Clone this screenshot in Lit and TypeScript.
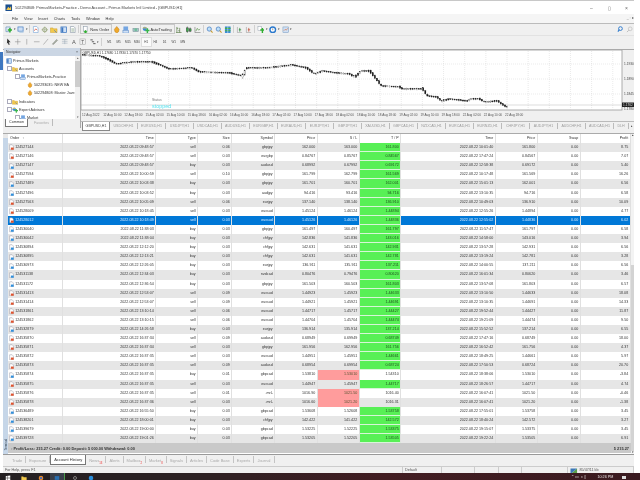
import { LitElement, css, html, svg } from 'lit';
import { customElement } from 'lit/decorators.js';

// id|open time|type|size|symbol|price|s/l|t/p|close time|close price|profit|s = stop hit
const ROWS = `124527144|09:48:57|sell|0.06|gbpjpy|162.000|163.000|161.800|10:01:40|161.800|8.75
124527146|09:48:57|sell|0.03|eurgbp|0.84767|0.85767|0.84567|17:47:24|0.84567|7.07
124527147|09:48:57|buy|0.03|audusd|0.68992|0.67992|0.69172|12:58:38|0.69172|5.40
124527594|10:00:59|sell|0.10|gbpjpy|161.799|162.799|161.569|10:17:48|161.569|16.26
124527489|10:03:38|buy|0.03|gbpjpy|161.701|160.701|162.001|15:01:13|162.001|6.56
124527496|10:03:52|buy|0.03|audjpy|94.416|93.416|94.716|13:10:35|94.716|6.58
124527563|10:05:09|sell|0.06|eurjpy|137.140|138.140|136.910|10:49:03|136.910|10.09
124528009|10:18:45|sell|0.03|euraud|1.45124|1.46124|1.44894|12:55:26|1.44894|4.77
124528012|10:18:49|sell|0.03|euraud|1.45126|1.46126|1.44836|12:55:02|1.44836|6.02
124530040|11:38:03|buy|0.03|gbpjpy|161.497|160.497|161.797|11:57:47|161.797|6.58
124530042|11:38:04|buy|0.03|chfjpy|142.836|141.836|143.016|14:58:00|143.016|3.94
124530894|12:12:20|buy|0.03|chfjpy|142.631|141.631|142.931|13:57:28|142.931|6.56
124530895|12:13:21|buy|0.03|chfjpy|142.631|141.631|142.781|13:19:24|142.781|3.28
124530973|12:26:05|buy|0.03|eurjpy|136.911|135.911|137.211|14:00:55|137.211|6.56
124531138|12:34:03|buy|0.03|nzdcad|0.80476|0.79476|0.80620|16:01:34|0.80620|3.46
124531172|12:36:54|buy|0.03|gbpjpy|161.503|160.503|161.803|13:57:08|161.803|6.57
124531413|12:53:07|sell|0.09|euraud|1.44923|1.45923|1.44633|13:10:50|1.44633|18.08
124531414|12:53:07|sell|0.09|euraud|1.44921|1.45921|1.44691|13:10:35|1.44691|14.33
124531861|13:10:14|sell|0.06|euraud|1.44717|1.45717|1.44427|19:52:44|1.44427|11.87
124531862|13:10:15|sell|0.06|euraud|1.44704|1.45704|1.44474|19:21:09|1.44474|9.50
124532879|14:26:58|buy|0.03|eurjpy|136.914|135.914|137.214|15:52:52|137.214|6.55
124535870|16:37:34|sell|0.09|audusd|0.68949|0.69949|0.68749|17:47:16|0.68749|18.00
124535871|16:37:34|sell|0.03|gbpjpy|161.956|162.956|161.756|16:52:42|161.756|4.37
124535872|16:37:35|sell|0.03|euraud|1.44951|1.45951|1.44661|18:49:25|1.44661|5.97
124535873|16:37:35|sell|0.09|audusd|0.68954|0.69954|0.68724|17:50:53|0.68724|20.70
124535874|16:37:35|buy|0.01|gbpcad|1.53810|1.53010|1.54310|18:38:06|1.53010|-3.84|s
124535875|16:37:35|sell|0.03|euraud|1.44947|1.45947|1.44717|18:26:57|1.44717|4.74
124535876|16:37:35|sell|0.01|.mrl-|1016.90|1021.50|1016.40|16:07:41|1021.50|-0.46|s
124535878|16:37:36|sell|0.03|.mrl-|1016.60|1021.20|1016.31|16:07:41|1021.20|-1.38|s
124536489|16:55:50|buy|0.03|gbpcad|1.53608|1.52608|1.53758|17:55:01|1.53758|3.45
124538201|18:00:01|buy|0.03|chfjpy|142.422|141.422|142.572|18:40:24|142.572|3.27
124539679|19:00:00|buy|0.03|gbpcad|1.53225|1.52225|1.53375|19:15:07|1.53375|3.45
124539728|19:01:26|buy|0.03|gbpcad|1.53205|1.52205|1.53505|19:22:24|1.53505|6.91`
  .split('\n')
  .map((l) => l.split('|'));

const HEADS = ['Time', 'Type', 'Size', 'Symbol', 'Price', 'S / L', 'T / P', 'Time', 'Price', 'Swap', 'Profit'];

const CHART_TABS = 'USDCHF EURUSD USDJPY USDCAD AUDUSD EURGBP EURAUD EURJPY GBPJPY XAUUSD GBPCAD NZDCAD EURCAD EURNZD CHFJPY AUDJPY AUDCHF AUDCAD'.split(' ');

const TIME_LABELS = ['12 Aug 2022', '12 Aug 10:00', '12 Aug 18:00', '15 Aug 02:00', '15 Aug 10:00', '15 Aug 18:00', '16 Aug 02:00', '16 Aug 10:00', '16 Aug 18:00', '17 Aug 02:00', '17 Aug 10:00', '17 Aug 18:00', '18 Aug 02:00', '18 Aug 10:00', '18 Aug 18:00', '19 Aug 02:00', '19 Aug 10:00', '19 Aug 18:00', '22 Aug 02:00', '22 Aug 10:00', '22 Aug 18:00'];

// price path read off the chart, in screen pixels
const PATH = [[83, 55], [100, 56], [108, 59], [117, 64], [133, 62], [153, 62], [170, 69], [193, 68], [200, 72], [230, 73], [243, 76], [247, 68], [267, 68], [293, 65], [307, 68], [315, 74], [323, 71], [337, 73], [350, 74], [355, 77], [362, 71], [370, 71], [375, 77], [382, 86], [400, 87], [403, 89], [423, 89], [428, 96], [437, 97], [442, 101], [450, 99], [467, 101], [472, 99], [480, 99], [485, 102], [498, 101], [502, 104], [507, 107]];

function pathY(x: number) {
  for (let i = 1; i < PATH.length; i++) {
    const [x0, y0] = PATH[i - 1];
    const [x1, y1] = PATH[i];
    if (x <= x1) return y0 + ((y1 - y0) * (x - x0)) / (x1 - x0);
  }
  return 107;
}

function candles() {
  const out = [];
  for (let x = 83; x < 508; x += 2.1) {
    const cx = x - 81;
    const y = pathY(x) - 50;
    const d = pathY(x + 2.1) - 50 - y;
    const body = Math.max(0.7, Math.abs(d) + Math.abs(Math.sin(x * 1.7)) * 0.8);
    const wick = body + 0.8 + Math.abs(Math.sin(x * 0.9)) * 1.1;
    const fill = d > 0.2 || Math.sin(x * 2.3) > 0.3 ? '#111' : '#fff';
    out.push(svg`<line x1=${cx} x2=${cx} y1=${y - wick / 2} y2=${y + wick / 2} stroke="#222" stroke-width=".35" />
      <rect x=${cx - 0.65} y=${y - body / 2} width="1.3" height=${body} fill=${fill} stroke="#222" stroke-width=".25" />`);
  }
  return out;
}

const g = (inner: unknown) => html`<svg class="ic" viewBox="0 0 16 16">${inner}</svg>`;

const page = (c = '#7fa8d8') => svg`<path d="M3 1h7l3 3v10H3z" fill="#fff" stroke=${c} stroke-width="1.4" />`;

const ICONS: Record<string, unknown> = {
  newchart: svg`<path d="M2 2h9v10H2z" fill="#dfe9f5" stroke="#6a8fb8" stroke-width="1.4" /><path d="M6 7h3V4h3v3h3v3h-3v4H9v-4H6z" fill="#2fae2f" />`,
  profile: svg`<rect x="2" y="2" width="11" height="9" fill="#cfe0f5" stroke="#3f78c0" stroke-width="1.4" /><rect x="5" y="11" width="9" height="3" fill="#9dbde0" />`,
  chartred: svg`${page()}<path d="M5 10l3-4 3 3" stroke="#d9482e" fill="none" stroke-width="1.6" />`,
  target: svg`<circle cx="8" cy="8" r="4.5" fill="none" stroke="#8a9a6a" stroke-width="1.6" /><path d="M8 1v14M1 8h14" stroke="#8a9a6a" />`,
  folder: svg`<path d="M1 4h5l1 2h8v8H1z" fill="#f2c94c" stroke="#c79a2a" /><path d="M9 9l5 5" stroke="#5a7bb0" stroke-width="1.6" />`,
  window: svg`<rect x="2" y="2" width="12" height="12" fill="#cfe0f5" stroke="#3f78c0" stroke-width="1.6" /><rect x="3" y="3" width="4" height="10" fill="#3f78c0" />`,
  doc: svg`${page('#8d9aa8')}<path d="M5 6h6M5 8.5h6M5 11h6" stroke="#6d8f6d" />`,
  order: svg`<rect x="3" y="1" width="8" height="10" fill="#fff" stroke="#8d9aa8" stroke-width="1.2" /><path d="M6 9h3v2h2v3H9v2H6v-2H4v-3h2z" fill="#2fae2f" />`,
  bulb: svg`<path d="M8 1l5 6-1 5-4 3-4-3-1-5z" fill="#f0a92c" stroke="#b97a16" />`,
  person: svg`<rect x="3" y="1" width="10" height="8" fill="#74a6e2" /><rect x="2" y="9" width="12" height="6" fill="#cfe0f5" stroke="#3f78c0" />`,
  printer: svg`<rect x="2" y="5" width="12" height="7" fill="#a9c4c8" stroke="#6f8c90" /><circle cx="8" cy="8" r="3" fill="#6fbf9a" />`,
  auto: svg`<circle cx="6" cy="6" r="4.5" fill="#3c8ad9" /><path d="M7 8h3V5h3v3h3v3h-3v4h-3v-4H7z" fill="#39b54a" /><path d="M2 4h8" stroke="#f2c94c" stroke-width="2" />`,
  bars: svg`<path d="M4 2v12M4 5h3M10 4v10M10 10H7M2 14h12" stroke="#5c7d4a" stroke-width="1.5" fill="none" />`,
  candle: svg`<path d="M5 1v14M11 3v10" stroke="#333" /><rect x="3" y="4" width="4" height="8" fill="#38b24a" stroke="#333" /><rect x="9" y="6" width="4" height="5" fill="#38b24a" stroke="#333" />`,
  line: svg`<path d="M2 2v12h12" stroke="#777" fill="none" stroke-width="1.3" /><path d="M4 11l3-6 3 4 3-3" stroke="#4a8a3a" fill="none" stroke-width="1.3" />`,
  zoomin: svg`<circle cx="7" cy="6.5" r="4.5" fill="#bfe0f8" stroke="#3f78c0" stroke-width="1.5" /><path d="M10 10l4 4" stroke="#c79a2a" stroke-width="2.2" />`,
  grid: svg`<rect x="2" y="1" width="12" height="14" fill="#3c8ad9" /><path d="M2 5h12M2 10h12" stroke="#46b04a" stroke-width="2.4" /><path d="M8 1v14" stroke="#fff" />`,
  shiftr: svg`<path d="M3 2v12h10" stroke="#888" fill="none" /><path d="M8 4v8M6 8h5" stroke="#2e8a3a" stroke-width="1.6" />`,
  shiftl: svg`<path d="M3 2v12h10" stroke="#888" fill="none" /><path d="M8 4v8M6 8h5" stroke="#c0503a" stroke-width="1.6" />`,
  indicator: svg`<rect x="2" y="1" width="8" height="9" fill="#fff" stroke="#8d9aa8" /><path d="M7 7h3V4h3v3h3v3h-3v5h-3v-5H7z" fill="#2fae2f" />`,
  clock: svg`<circle cx="8" cy="8" r="6" fill="#fff" stroke="#2a78cc" stroke-width="3" /><path d="M8 5v4" stroke="#333" />`,
  tpl: svg`<rect x="2" y="2" width="12" height="12" fill="#cfe0f5" stroke="#6a8fb8" /><path d="M4 10l3-3 2 2 3-4" stroke="#d9682e" fill="none" stroke-width="1.3" />`,
  cursor: svg`<path d="M5 1l7 8H8l2 5-2 1-2-5-2 2z" fill="#333" />`,
  cross: svg`<path d="M8 2v12M2 8h12" stroke="#777" />`,
  vline: svg`<path d="M8 2v12" stroke="#777" />`,
  hline: svg`<path d="M2 8h12" stroke="#777" />`,
  trend: svg`<path d="M3 14L13 2" stroke="#777" />`,
  pen: svg`<path d="M3 13L12 3l2 2-9 9z" fill="#a9b3a0" stroke="#777" />`,
  fib: svg`<path d="M2 3h12M2 7h12M2 11h12M8 3v10" stroke="#8fa0b0" />`,
  letterA: svg`<text x="8" y="13" font-size="12" text-anchor="middle" fill="#555" font-family="Liberation Sans">A</text>`,
  letterT: svg`<rect x="2" y="2" width="12" height="12" fill="none" stroke="#999" /><text x="8" y="12" font-size="10" text-anchor="middle" fill="#555" font-family="Liberation Sans">T</text>`,
  tool: svg`<path d="M3 4h5M6 8h5M9 12h5" stroke="#555" stroke-width="2" />`,
};

const TB1: (string | [string, string])[] = ['newchart', 'arrow', 'profile', 'arrow', 'sep', 'chartred', 'target', 'folder', 'window', 'doc', 'sep', ['order', 'New Order'], 'bulb', 'person', 'printer', ['auto', 'AutoTrading'], 'bars', 'candle', 'line', 'sep', 'zoomin', 'zoomin', 'grid', 'sep', 'shiftr', 'shiftl', 'sep', 'indicator', 'arrow', 'clock', 'arrow', 'tpl', 'arrow'];
const TB2 = ['cursor', 'cross', 'vline', 'hline', 'trend', 'pen', 'fib', 'letterA', 'letterT', 'tool', 'arrow', 'sep', 'gap'];
const PERIODS = ['M1', 'M5', 'M15', 'M30', 'H1', 'H4', 'D1', 'W1', 'MN'];

// indent, icon, label, has expander
const NAV: [number, string, string, boolean][] = [
  [2, 'window', 'Primus Markets', false],
  [8, 'folder', 'Accounts', true],
  [16, 'person', 'PrimusMarkets-Practice', true],
  [23, 'bulb', '502293035: NEW EA', false],
  [23, 'bulb', '502294808: Master Jave', false],
  [8, 'folder', 'Indicators', true],
  [8, 'auto', 'Expert Advisors', true],
  [16, 'person', 'Market', true],
];

const TERM_TABS: [string, string?][] = [['Trade'], ['Exposure'], ['Account History'], ['News', '13'], ['Alerts'], ['Mailbox', '2'], ['Market', '8'], ['Signals'], ['Articles'], ['Code Base'], ['Experts'], ['Journal']];

@customElement('app-root')
export class AppRoot extends LitElement {
  static override styles = css`
    :host {
      display: block;
      width: 640px;
      height: 480px;
      overflow: hidden;
      font-family: 'Liberation Sans', Arial, sans-serif;
      font-size: 3.65px;
      color: #333;
    }
    .screen {
      height: 480px;
      display: flex;
      flex-direction: column;
      background: linear-gradient(#3f78c0, #3f78c0) 0 52px / 3px 18px no-repeat, #fff;
      filter: blur(0.25px);
    }
    .win {
      height: 473px;
      display: flex;
      flex-direction: column;
      margin: 0 6px 0 3px;
      background: #f0f0f0;
      border-top: 1px solid #c8c8c8;
      box-sizing: border-box;
      overflow: hidden;
    }
    .ic { width: 7.5px; height: 7.5px; flex: none; display: block; }
    .title {
      height: 13px;
      flex: none;
      background: #fff;
      display: flex;
      align-items: center;
      padding-left: 2px;
      gap: 2.5px;
      font-size: 3.83px;
      color: #444;
    }
    .title .spacer { flex: 1; }
    .title .ctl { width: 15px; text-align: center; font-size: 5px; color: #666; }
    .menu {
      height: 9.5px;
      flex: none;
      background: #f5f5f5;
      border-bottom: 1px solid #bbb;
      box-sizing: border-box;
      display: flex;
      align-items: center;
      padding-left: 9px;
      gap: 5.8px;
      font-size: 3.9px;
    }
    .menu .spacer { flex: 1; }
    .menu .mdi { font-size: 3.5px; color: #666; }
    .tbar {
      flex: none;
      height: 12.5px;
      display: flex;
      align-items: center;
      padding-left: 1px;
      background: #f0f0f0;
      border-bottom: 1px solid #e2e2e2;
      box-sizing: border-box;
    }
    .tbar.second { height: 14px; padding-bottom: 2px; border-bottom: 1px solid #aaa; }
    .tbtn { width: 9.3px; height: 9px; display: flex; align-items: center; justify-content: center; flex: none; }
    .tarrow { width: 3px; flex: none; text-align: center; font-size: 3px; color: #333; }
    .tgap { width: 2.5px; flex: none; }
    .tsep { width: 1px; height: 8px; margin: 0 0.7px; background: #d0d0d0; flex: none; }
    .tlabel {
      display: flex;
      align-items: center;
      gap: 1px;
      height: 10px;
      padding: 0 2px 0 1px;
      border: 1px solid #c9c9c9;
      box-sizing: border-box;
      font-size: 3.9px;
      flex: none;
    }
    .tbar .spacer { flex: 1; }
    .period { width: 9.2px; height: 8px; flex: none; text-align: center; line-height: 8px; font-size: 3px; color: #444; }
    .period.on { background: #fafafa; outline: 0.5px solid #ddd; }
    .panes { flex: none; height: 80.5px; display: flex; }
    .nav {
      width: 77px;
      height: 79.5px;
      flex: none;
      margin: -2px 0 0 1px;
      display: flex;
      flex-direction: column;
      background: #fff;
      border-right: 1px solid #aaa;
      box-sizing: border-box;
    }
    .navhead {
      height: 7.5px;
      flex: none;
      background: #cbd6e4;
      display: flex;
      align-items: center;
      justify-content: space-between;
      padding: 0 2px;
      font-size: 3.4px;
    }
    .navbody { flex: 1; display: flex; min-height: 0; overflow: hidden; }
    .tree { flex: 1; overflow: hidden; padding-top: 1px; }
    .node { height: 8.2px; display: flex; align-items: center; gap: 1px; font-size: 3.7px; white-space: nowrap; position: relative; }
    .node .ic { width: 6px; height: 6px; }
    .node .box { position: absolute; margin-left: -5px; width: 3px; height: 3px; border: 0.5px solid #aab; background: #fff; }
    .vbar { width: 5px; flex: none; background: #f1f1f1; display: flex; flex-direction: column; align-items: center; font-size: 3px; color: #555; }
    .vbar .thumb { width: 100%; height: 26px; background: #cdcdcd; margin-top: 1px; }
    .vbar .fill { flex: 1; }
    .navtabs { height: 9px; flex: none; background: #f0f0f0; display: flex; align-items: flex-start; gap: 3px; font-size: 3.7px; }
    .navtabs .on { background: #fff; border: 1px solid #777; border-top: 0; box-sizing: border-box; padding: 1.5px 3px; margin-left: 1px; height: 8.5px; }
    .navtabs .off { padding: 2px 3px; color: #aaa; border-right: 1px solid #bbb; height: 7px; box-sizing: border-box; }
    .chart { flex: 1; min-width: 0; display: flex; flex-direction: column; }
    .chart svg.plot { display: block; flex: none; }
    .tabs { flex: none; height: 10px; display: flex; align-items: center; background: #f0f0f0; font-size: 3.6px; color: #999; border-top: 1px solid #bbb; box-sizing: border-box; overflow: hidden; }
    .ctab { width: 28px; flex: none; text-align: center; border-right: 1px solid #bbb; box-sizing: border-box; line-height: 6px; white-space: nowrap; }
    .ctab.on { height: 9px; line-height: 8px; background: #fff; border: 1px solid #888; border-top: 0; color: #444; margin-left: 1px; }
    .ctab.dlh { width: 15px; }
    .tabs .more { font-size: 3px; color: #333; margin-left: 2px; }
    .split { flex: none; height: 3px; background: #f0f0f0; border-bottom: 1px solid #aaa; box-sizing: border-box; }
    .terminal { flex: none; height: 320px; display: flex; }
    .gutter {
      width: 5px;
      flex: none;
      background: linear-gradient(#e9e9e9 0 4px, #c6d6e8 4px);
      display: flex;
      align-items: flex-end;
      justify-content: center;
    }
    .gutter span { writing-mode: vertical-rl; transform: rotate(180deg); font-size: 3px; color: #345; margin-bottom: 3px; }
    .table { width: 623px; flex: none; background: #fff; }
    .row, .head {
      display: grid;
      grid-template-columns: 54.6px 93.9px 42px 34px 43px 42.5px 42px 41.5px 94.5px 42px 43px 50px;
      height: 9.1px;
      line-height: 9.1px;
    }
    .head { height: 9.6px; line-height: 9.6px; }
    .row:nth-child(odd) { background: #e6e6e6; }
    .row.sel { background: #0078d7; color: #dfeeff; }
    .row > div, .head > div {
      text-align: right;
      padding-right: 1.8px;
      border-right: 0.5px solid #e0e0e0;
      box-sizing: border-box;
      white-space: nowrap;
      overflow: hidden;
    }
    .row > .order, .head > .order { text-align: left; padding-left: 1px; display: flex; align-items: center; gap: 1.2px; }
    .head > .order { padding-left: 2px; gap: 3px; }
    .row > .order .ic { width: 5px; height: 6.5px; }
    .row > .green { background: #58f056; color: #1c4a1c; border-bottom: 0.5px solid #d8f5d8; }
    .row > .red { background: #ff9c9c; color: #553; }
    .total {
      height: 10px;
      background: #c9c9c9;
      display: flex;
      justify-content: space-between;
      align-items: center;
      padding: 0 2px 0 3px;
      font-weight: bold;
      font-size: 3.9px;
    }
    .sbar { width: 3px; flex: none; background: #f3f3f3; display: flex; flex-direction: column; align-items: center; font-size: 2.5px; }
    .sbar .fill { flex: 1; }
    .sbar .thumb { width: 100%; height: 186px; background: #d3d3d3; }
    .bottom {
      flex: none;
      height: 12px;
      display: flex;
      align-items: flex-start;
      padding-left: 6px;
      border-top: 1px solid #999;
      background: #f0f0f0;
      box-sizing: border-box;
      font-size: 4px;
      color: #aaa;
    }
    .ttab { padding: 2px 3px 0; height: 7.5px; margin-top: 1px; border-right: 1px solid #c4c4c4; box-sizing: border-box; white-space: nowrap; }
    .ttab sub { color: #e33; font-size: 2.8px; line-height: 0; }
    .ttab.on { height: 10px; margin-top: 0; color: #333; background: #fff; border: 1px solid #777; border-top: 0; }
    .status {
      flex: 1;
      border-top: 1px solid #ccc;
      display: grid;
      grid-template-columns: 400px 39px 33px 24px 23px 46px 1fr;
      font-size: 3.7px;
      color: #555;
      line-height: 6px;
      min-height: 0;
      overflow: hidden;
    }
    .status > div { padding-left: 2px; border-right: 0.5px solid #ccc; white-space: nowrap; overflow: hidden; display: flex; gap: 2px; }
    .taskbar {
      height: 7px;
      flex: none;
      background: linear-gradient(90deg, #242022, #2c2123 30%, #421d22 60%, #3a1b20);
      display: flex;
      align-items: flex-start;
      gap: 1.75px;
      color: #e6e0e0;
      font-size: 3.7px;
      overflow: hidden;
    }
    .taskbar .btn { width: 15px; height: 7px; flex: none; display: flex; justify-content: center; padding-top: 1.5px; box-sizing: border-box; }
    .taskbar .btn .ic { width: 6px; height: 6px; }
    .taskbar .active { background: #3a3f4a; border-right: 1px solid #4a9a4a; }
    .taskbar .spacer { flex: 1; }
    .taskbar .clock { padding-top: 1.5px; white-space: nowrap; }
    .taskbar .tray { padding-top: 1.5px; margin-right: 10px; }
    .taskbar .note { width: 4px; height: 3px; margin: 2.5px 14px 0 7px; background: #ddd; flex: none; }
  `;

  private bar(items: (string | [string, string])[]) {
    return items.map((it) => {
      if (it === 'arrow') return html`<span class="tarrow">▾</span>`;
      if (it === 'sep') return html`<span class="tsep"></span>`;
      if (it === 'gap') return html`<span class="tgap"></span>`;
      if (Array.isArray(it)) return html`<span class="tlabel">${g(ICONS[it[0]])}${it[1]}</span>`;
      return html`<span class="tbtn">${g(ICONS[it as string])}</span>`;
    });
  }

  private chart() {
    const vx = Array.from({ length: 26 }, (_, i) => 3 + i * 21.15);
    return svg`<svg class="plot" width="553" height="70.5" viewBox="0 0 553 70.5" font-family="Liberation Sans, Arial, sans-serif">
      <rect x="0" y="0" width="541" height="60" fill="#fff" stroke="#9a9a9a" stroke-width=".8" />
      ${vx.slice(1).map((x) => svg`<line x1=${x} x2=${x} y1="1" y2="60" stroke="#c9c9c9" stroke-width=".4" stroke-dasharray="1 1" />`)}
      ${[14, 29, 44].map((y) => svg`<line x1="0" x2="541" y1=${y} y2=${y} stroke="#c9c9c9" stroke-width=".4" stroke-dasharray="1 1" />`)}
      <line x1="0" x2="541" y1="55" y2="55" stroke="#aaa" stroke-width=".4" />
      <text x="1.5" y="4.2" font-size="3.2" fill="#333">GBPUSD,H1  1.17680 1.17830 1.17470 1.17750</text>
      ${candles()}
      <text x="71" y="51" font-size="3.4" fill="#777">Status</text>
      <text x="71" y="58" font-size="5.4" fill="#55e2ef">stopped</text>
      ${[['1.1930', 14], ['1.1890', 29], ['1.1845', 44]].map(([t, y]) => svg`<text x="543" y=${(y as number) + 1.2} font-size="3.2" fill="#444">${t}</text>`)}
      <rect x="541" y="52.5" width="12" height="4.5" fill="#222" />
      <text x="542" y="56" font-size="3.2" fill="#ddd">1.1762</text>
      <text x="543" y="60" font-size="3.2" fill="#444">1.1780</text>
      ${TIME_LABELS.map((t, i) => svg`<text x=${1 + i * 21.15} y="66" font-size="3.1" fill="#555">${t}</text>`)}
    </svg>`;
  }

  override render() {
    return html`
      <div class="screen">
        <div class="win">
          <div class="title">
            ${g(svg`<rect x="1" y="1" width="14" height="14" fill="#1c4f8f" /><path d="M3 12l4-6 3 3 3-5v9H3z" fill="#f2c94c" />`)}
            <span>502294808: PrimusMarkets-Practice - Demo Account - Primus Markets Intl Limited - [GBPUSD,H1]</span>
            <span class="spacer"></span>
            <span class="ctl">–</span><span class="ctl">▯</span><span class="ctl">×</span>
          </div>
          <div class="menu">
            ${['File', 'View', 'Insert', 'Charts', 'Tools', 'Window', 'Help'].map((m) => html`<span>${m}</span>`)}
            <span class="spacer"></span>
            <span class="mdi">_ ▫ ▸</span>
          </div>
          <div class="tbar">
            ${this.bar(TB1)}
            <span class="spacer"></span>
            <span class="tbtn">${g(svg`<path d="M4 12l3-4" stroke="#2a78cc" stroke-width="2.4" /><circle cx="9.5" cy="5.5" r="4" fill="none" stroke="#2a78cc" stroke-width="2" />`)}</span>
            <span class="tbtn">${g(svg`<path d="M2 13l4-4" stroke="#bbb" stroke-width="2" /><circle cx="9" cy="6" r="4" fill="none" stroke="#bbb" stroke-width="1.4" />`)}</span>
          </div>
          <div class="tbar second">
            ${this.bar(TB2)}
            ${PERIODS.map((p) => html`<span class="period ${p === 'H1' ? 'on' : ''}">${p}</span>`)}
          </div>
          <div class="panes">
            <div class="nav">
              <div class="navhead"><span>Navigator</span><span>×</span></div>
              <div class="navbody">
                <div class="tree">
                  ${NAV.map(([pad, ic, t, box]) => html`<div class="node" style="padding-left:${pad}px">${box ? html`<span class="box"></span>` : ''}${g(ICONS[ic])}<span>${t}</span></div>`)}
                </div>
                <div class="vbar"><span>▴</span><div class="thumb"></div><div class="fill"></div><span>▾</span></div>
              </div>
              <div class="navtabs"><span class="on">Common</span><span class="off">Favorites</span></div>
            </div>
            <div class="chart">
              ${this.chart()}
              <div class="tabs">
                <span class="ctab on">GBPUSD,H1</span>
                ${CHART_TABS.map((t) => html`<span class="ctab">${t},H1</span>`)}
                <span class="ctab dlh">DLH</span>
                <span class="more">▸</span>
              </div>
            </div>
          </div>
          <div class="split"></div>
          <div class="terminal">
            <div class="gutter"><span>Terminal</span></div>
            <div class="table">
              <div class="head">
                <div class="order">Order <span>↑</span></div>
                ${HEADS.map((h) => html`<div>${h}</div>`)}
                <div></div>
              </div>
              <div>
                ${ROWS.map((r, i) => html`
                  <div class="row ${i === 8 ? 'sel' : ''}">
                    <div class="order">${g(svg`<path d="M2 0h8l4 4v12H2z" fill="#fff" stroke="#778" stroke-width="1.2" /><rect x="6" y="9" width="9" height="7" fill=${r[2] === 'buy' ? '#2f8fdc' : '#e0532e'} />`)}${r[0]}</div>
                    <div>2022.08.22 ${r[1]}</div>
                    <div>${r[2]}</div>
                    <div>${r[3]}</div>
                    <div>${r[4]}</div>
                    <div>${r[5]}</div>
                    <div class=${r[11] ? 'red' : ''}>${r[6]}</div>
                    <div class=${r[11] ? '' : 'green'}>${r[7]}</div>
                    <div>2022.08.22 ${r[8]}</div>
                    <div>${r[9]}</div>
                    <div>0.00</div>
                    <div>${r[10]}</div>
                  </div>`)}
              </div>
              <div class="total"><span>◦ Profit/Loss: 215.27  Credit: 0.00  Deposit: 5 000.00  Withdrawal: 0.00</span><span>5 215.27</span></div>
            </div>
            <div class="sbar"><span>▴</span><div class="fill"></div><div class="thumb"></div><span>▾</span></div>
          </div>
          <div class="bottom">
            ${TERM_TABS.map(([t, n]) => html`<span class="ttab ${t === 'Account History' ? 'on' : ''}">${t}${n ? html`<sub>${n}</sub>` : ''}</span>`)}
          </div>
          <div class="status">
            <div>For Help, press F1</div><div>Default</div><div></div><div></div><div></div><div></div>
            <div>${g(svg`<path d="M1 15L15 3v12z" fill="#5ba04a" /><path d="M1 15L15 3H1z" fill="#3b78b8" />`)}85/47/11 kb</div>
          </div>
        </div>
        <div class="taskbar">
          <span class="btn">${g(svg`<path d="M2 3l5-1v5.5H2zM8 2l6-1v6.5H8zM2 8.5h5V14l-5-1zM8 8.5h6V15l-6-1z" fill="#fff" />`)}</span>
          <span class="btn">${g(svg`<path d="M1 4h5l1 2h8v8H1z" fill="#f2c94c" />`)}</span>
          <span class="btn">${g(svg`<circle cx="8" cy="8" r="6" fill="#e68a2e" /><circle cx="8" cy="8" r="3" fill="#3d6ccc" />`)}</span>
          <span class="btn active">${g(svg`<rect x="2" y="3" width="12" height="10" fill="#2a6fb0" />`)}</span>
          <span class="btn">${g(svg`<circle cx="8" cy="8" r="4" fill="none" stroke="#999" stroke-width="2" />`)}</span>
          <span class="btn">${g(svg`<circle cx="8" cy="8" r="6" fill="#2a8fdc" />`)}</span>
          <span class="spacer"></span>
          <span class="tray">⌃ ▭ ◖ ▯</span>
          <span class="clock">10:26 PM</span>
          <span class="note"></span>
        </div>
      </div>
    `;
  }
}

declare global {
  interface HTMLElementTagNameMap {
    'app-root': AppRoot;
  }
}
